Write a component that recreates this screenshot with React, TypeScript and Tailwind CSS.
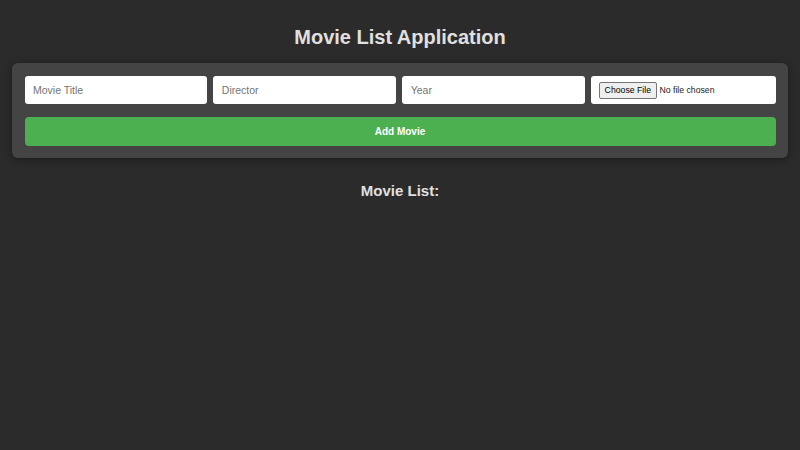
export default function App() {
  return (
    <div
      className="min-h-screen bg-[#2b2b2b] px-3 pt-[26px] text-[#e0e0e0]"
      style={{ fontFamily: '"Liberation Sans", Arial, sans-serif' }}
    >
      <h1 className="text-center text-[20px] font-bold leading-[23px]">
        Movie List Application
      </h1>

      <form
        className="mt-[14px] rounded-[6px] bg-[#444444] p-[12.5px] shadow-[0_2px_8px_rgba(0,0,0,0.35)]"
        onSubmit={(e) => e.preventDefault()}
      >
        <div className="grid grid-cols-[182fr_182fr_182fr_184fr] gap-[6.5px]">
          <input
            className="h-[28px] w-full rounded-[3px] bg-white px-[8.5px] text-[10.5px] text-black outline-none placeholder:text-[#757575]"
            placeholder="Movie Title"
            type="text"
          />
          <input
            className="h-[28px] w-full rounded-[3px] bg-white px-[8.5px] text-[10.5px] text-black outline-none placeholder:text-[#757575]"
            placeholder="Director"
            type="text"
          />
          <input
            className="h-[28px] w-full rounded-[3px] bg-white px-[8.5px] text-[10.5px] text-black outline-none placeholder:text-[#757575]"
            placeholder="Year"
            type="text"
          />
          <input
            className="h-[28px] w-full rounded-[3px] bg-white px-[7.5px] py-[6.5px] text-[8.7px] text-[#222] outline-none file:mr-[2.5px] file:rounded-[2px] file:border file:border-[#767676] file:bg-[#efefef] file:px-[5px] file:py-[1px] file:text-black"
            type="file"
          />
        </div>

        <button
          className="mt-[13px] h-[29px] w-full rounded-[4px] bg-[#4caf50] text-[10px] font-bold text-white"
          type="submit"
        >
          Add Movie
        </button>
      </form>

      <h2 className="mt-[24px] text-center text-[15px] font-bold leading-[17px]">
        Movie List:
      </h2>
    </div>
  );
}
